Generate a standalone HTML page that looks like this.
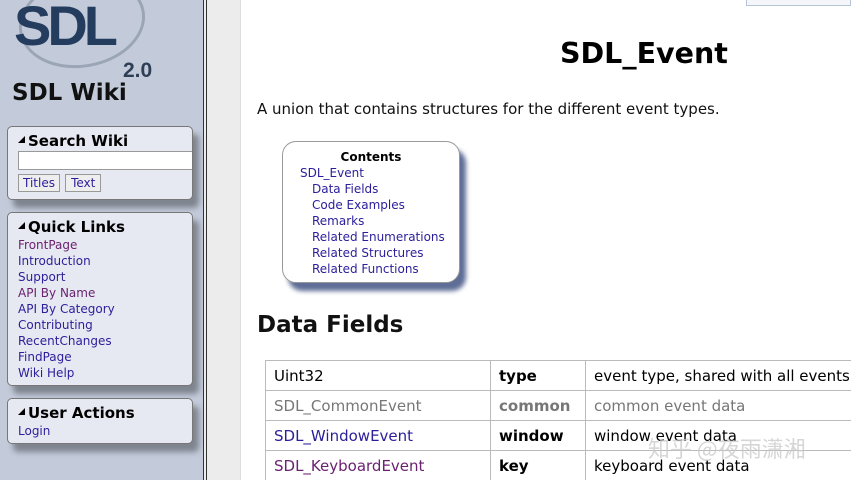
<!DOCTYPE html>
<html><head><meta charset="utf-8"><style>
*{margin:0;padding:0;box-sizing:border-box}
html,body{width:851px;height:480px;overflow:hidden}
body{background:#ececec;font-family:"DejaVu Sans","Liberation Sans",sans-serif;position:relative}
#side{position:absolute;left:0;top:0;width:203px;height:480px;background:#c3cbdb}
#div{position:absolute;left:203px;top:0;width:4px;height:480px;background:#ececec;border-left:1px solid #333;border-right:1px solid #333}
#main{position:absolute;left:240px;top:-10px;width:620px;height:490px;background:#fff;border-left:1px solid #ddd;border-radius:12px 0 0 0}
.box{position:absolute;left:7px;width:186px;background:#e7e9f2;border:1px solid #777;border-radius:5px;box-shadow:6px 8px 6px rgba(0,0,0,.35);padding:5px 10px 3px}
.box h3{font-size:15px;font-weight:bold;color:#000;line-height:18px;margin-bottom:1px}
.box h3:before{content:"";display:inline-block;width:0;height:0;border-left:7px solid transparent;border-bottom:7px solid #000;margin-right:3px;vertical-align:3px}
.box a{display:block;font-size:12px;line-height:16px;color:#2a1e9a;text-decoration:none}
.v{color:#6a2270!important}
table{position:absolute;left:265px;top:360px;border-collapse:collapse;font-size:15px;table-layout:fixed;width:600px}
td{border:1px solid #bbb;height:30px;padding:0 8px;white-space:nowrap;overflow:hidden}
</style></head><body>
<div id="side">
<svg width="170" height="80" style="position:absolute;left:0;top:0">
<ellipse cx="82" cy="22" rx="62" ry="44" fill="none" stroke="#9aa6b6" stroke-width="3" transform="rotate(-10 82 22)"/>
<text x="14" y="45" font-family="Liberation Sans,sans-serif" font-weight="bold" font-size="56" fill="#243d5e" letter-spacing="-4">SDL</text>
<text x="123" y="77" font-family="Liberation Sans,sans-serif" font-weight="bold" font-size="21" fill="#2e3e55">2.0</text>
</svg>
<div style="position:absolute;left:12px;top:80px;font-size:23px;font-weight:bold;color:#111">SDL Wiki</div>
<div class="box" style="top:126px;height:74px;padding-right:0">
<h3>Search Wiki</h3>
<div style="height:19px;background:#fff;border:1px solid #999;border-right:none"></div>
<div style="margin-top:2px"><span style="display:inline-block;border:1px solid #999;background:#eee;font-size:12px;color:#2a1e9a;padding:1px 4px">Titles</span> <span style="display:inline-block;border:1px solid #999;background:#eee;font-size:12px;color:#2a1e9a;padding:1px 5px">Text</span></div>
</div>
<div class="box" style="top:212px;height:174px">
<h3>Quick Links</h3>
<a class="v">FrontPage</a><a>Introduction</a><a>Support</a><a class="v">API By Name</a><a>API By Category</a><a>Contributing</a><a>RecentChanges</a><a>FindPage</a><a>Wiki Help</a>
</div>
<div class="box" style="top:398px;height:46px">
<h3>User Actions</h3><a>Login</a>
</div>
</div>
<div id="div"></div>
<div id="main"></div>
<div style="position:absolute;left:746px;top:0;width:105px;height:6px;border:1px solid #b7c4d6;border-top:none;background:#f4f6fa"></div>
<div style="position:absolute;left:560px;top:37px;font-size:28.5px;font-weight:bold;color:#000">SDL_Event</div>
<div style="position:absolute;left:257px;top:100px;font-size:15px;color:#111">A union that contains structures for the different event types.</div>
<div style="position:absolute;left:282px;top:141px;width:178px;height:142px;border:1px solid #999;border-radius:14px;background:#fff;box-shadow:6px 8px 5px #5e6e96;padding:7px 0 0 17px;font-size:12px;line-height:16px;color:#2a1e9a">
<div style="text-align:center;font-weight:bold;color:#000;font-size:12px;margin-left:-17px">Contents</div>
<div>SDL_Event</div>
<div style="padding-left:12px">Data Fields<br>Code Examples<br>Remarks<br>Related Enumerations<br>Related Structures<br>Related Functions</div>
</div>
<div style="position:absolute;left:257px;top:312px;font-size:23px;font-weight:bold;color:#111">Data Fields</div>
<table>
<colgroup><col style="width:225px"><col style="width:95px"><col style="width:280px"></colgroup>
<tr><td>Uint32</td><td style="font-weight:bold">type</td><td>event type, shared with all events</td></tr>
<tr style="color:#777"><td>SDL_CommonEvent</td><td style="font-weight:bold">common</td><td>common event data</td></tr>
<tr><td style="color:#2a1e9a">SDL_WindowEvent</td><td style="font-weight:bold">window</td><td>window event data</td></tr>
<tr><td style="color:#6a2270">SDL_KeyboardEvent</td><td style="font-weight:bold">key</td><td>keyboard event data</td></tr>
</table>
<div style="position:absolute;left:648px;top:432px;font-size:22px;color:rgba(200,200,200,.75);font-family:'Noto Sans CJK SC',sans-serif">知乎 @夜雨潇湘</div>
</body></html>
